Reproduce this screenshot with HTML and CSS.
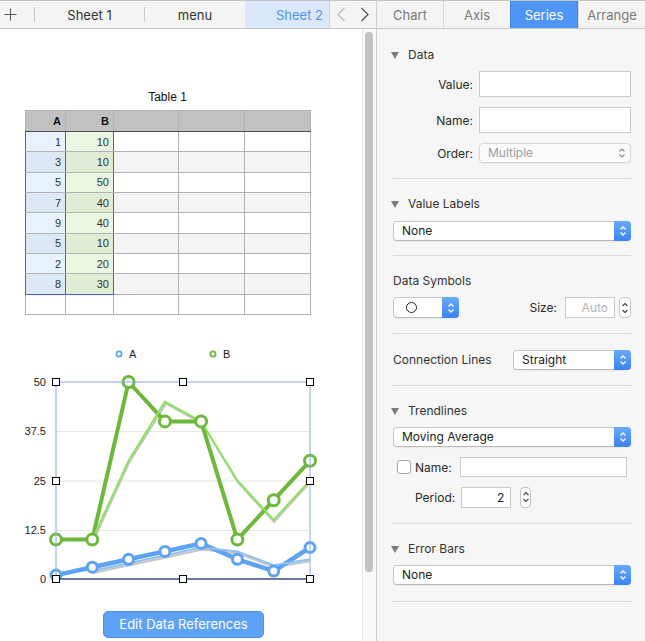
FILE: index.html
```html
<!DOCTYPE html>
<html lang="en">
<head>
    <meta charset="UTF-8">
    <title>Series Inspector</title>
    <link rel="stylesheet" href="styles.css">
</head>
<body>
<div class="app">
    <div class="sheet">
        <div class="sheet-tabs">
            <span class="tab-add">
                <svg width="13" height="13" viewBox="0 0 13 13"><path d="M6.5 0.5v12M0.5 6.5h12" stroke="#555" stroke-width="1"/></svg>
            </span>
            <span class="sep"></span>
            <span class="tab tab-wide">Sheet 1</span>
            <span class="sep"></span>
            <span class="tab">menu</span>
            <span class="tab active">Sheet 2</span>
            <span class="tab-nav">
                <svg width="10" height="15" viewBox="0 0 10 15"><path d="M8.5 1L2 7.5 8.5 14" fill="none" stroke="#bdbdbd" stroke-width="1.3"/></svg>
                <svg width="10" height="15" viewBox="0 0 10 15"><path d="M1.5 1L8 7.5 1.5 14" fill="none" stroke="#555" stroke-width="1.3"/></svg>
            </span>
        </div>
        <div class="sheet-body">
            <div class="canvas">
                <div class="table-title">Table 1</div>
                <table class="grid">
                    <colgroup>
                        <col style="width:40px"><col style="width:48px"><col style="width:65px"><col style="width:66px"><col style="width:66px">
                    </colgroup>
                    <tr class="head"><th>A</th><th>B</th><th></th><th></th><th></th></tr>
                    <tr><td class="a">1</td><td class="b">10</td><td></td><td></td><td></td></tr>
                    <tr class="alt"><td class="a">3</td><td class="b">10</td><td></td><td></td><td></td></tr>
                    <tr><td class="a">5</td><td class="b">50</td><td></td><td></td><td></td></tr>
                    <tr class="alt"><td class="a">7</td><td class="b">40</td><td></td><td></td><td></td></tr>
                    <tr><td class="a">9</td><td class="b">40</td><td></td><td></td><td></td></tr>
                    <tr class="alt"><td class="a">5</td><td class="b">10</td><td></td><td></td><td></td></tr>
                    <tr><td class="a">2</td><td class="b">20</td><td></td><td></td><td></td></tr>
                    <tr class="alt last"><td class="a">8</td><td class="b">30</td><td></td><td></td><td></td></tr>
                    <tr><td></td><td></td><td></td><td></td><td></td></tr>
                </table>

                <svg class="chart" width="340" height="262" viewBox="0 340 340 262">
                    <!-- legend -->
                    <circle cx="119" cy="353" r="2.6" fill="#fff" stroke="#5ea2f2" stroke-width="1.8"/>
                    <text x="129" y="357" class="lbl">A</text>
                    <circle cx="213" cy="353" r="2.6" fill="#fff" stroke="#6cb83a" stroke-width="1.8"/>
                    <text x="223" y="357" class="lbl">B</text>

                    <!-- axis labels -->
                    <g class="lbl" text-anchor="end">
                        <text x="46" y="385">50</text>
                        <text x="46" y="434">37.5</text>
                        <text x="46" y="484">25</text>
                        <text x="46" y="533">12.5</text>
                        <text x="46" y="582">0</text>
                    </g>
                    <g stroke="#e6e6e6" stroke-width="1">
                        <line x1="56" y1="430.5" x2="310" y2="430.5"/>
                        <line x1="56" y1="480" x2="310" y2="480"/>
                        <line x1="56" y1="529.5" x2="310" y2="529.5"/>
                    </g>

                    <!-- trendline shadows -->
                    <g fill="none" stroke="#c4c4c4" stroke-width="2">
                        <polyline points="93,540.6 129,461.8 166,402.7 202,422.4 238,481.5 274,520.9 310,481.5"/>
                        <polyline points="93,572.1 129,564.2 166,556.4 202,548.5 238,552.4 274,566.2 310,560.3"/>
                    </g>

                    <!-- series A -->
                    <polyline points="56,574.1 92.3,566.2 128.6,558.3 164.9,550.4 201.1,542.5 237.4,558.3 273.7,570.1 310,546.5" fill="none" stroke="#5ea2f2" stroke-width="4.5" stroke-linejoin="round"/>
                    <!-- series B -->
                    <polyline points="56,538.6 92.3,538.6 128.6,381 164.9,420.4 201.1,420.4 237.4,538.6 273.7,499.2 310,459.8" fill="none" stroke="#6cb83a" stroke-width="4" stroke-linejoin="round"/>

                    <!-- trendlines -->
                    <polyline points="92.3,538.6 128.6,459.8 164.9,400.7 201.1,420.4 237.4,479.5 273.7,518.9 310,479.5" fill="none" stroke="#8de35c" stroke-width="2"/>
                    <polyline points="92.3,570.1 128.6,562.2 164.9,554.4 201.1,546.5 237.4,550.4 273.7,564.2 310,558.3" fill="none" stroke="#8dc0f7" stroke-width="2"/>

                    <!-- markers -->
                    <g fill="#fff" stroke="#5ea2f2" stroke-width="3">
                        <circle cx="56" cy="574.1" r="5"/>
                        <circle cx="92.3" cy="566.2" r="5"/>
                        <circle cx="128.6" cy="558.3" r="5"/>
                        <circle cx="164.9" cy="550.4" r="5"/>
                        <circle cx="201.1" cy="542.5" r="5"/>
                        <circle cx="237.4" cy="558.3" r="5"/>
                        <circle cx="273.7" cy="570.1" r="5"/>
                        <circle cx="310" cy="546.5" r="5"/>
                    </g>
                    <g fill="#fff" stroke="#6cb83a" stroke-width="3">
                        <circle cx="56" cy="538.6" r="5.5"/>
                        <circle cx="92.3" cy="538.6" r="5.5"/>
                        <circle cx="128.6" cy="381" r="5.5"/>
                        <circle cx="164.9" cy="420.4" r="5.5"/>
                        <circle cx="201.1" cy="420.4" r="5.5"/>
                        <circle cx="237.4" cy="538.6" r="5.5"/>
                        <circle cx="273.7" cy="499.2" r="5.5"/>
                        <circle cx="310" cy="459.8" r="5.5"/>
                    </g>

                    <!-- baseline + selection frame -->
                    <line x1="56" y1="578" x2="310" y2="578" stroke="#111" stroke-width="1.5"/>
                    <rect x="56" y="381" width="254" height="197" fill="none" stroke="#86a6f2" stroke-width="1"/>
                    <g fill="#fff" stroke="#000" stroke-width="1">
                        <rect x="52.5" y="377.5" width="7" height="7"/>
                        <rect x="179.5" y="377.5" width="7" height="7"/>
                        <rect x="306.5" y="377.5" width="7" height="7"/>
                        <rect x="52.5" y="476.5" width="7" height="7"/>
                        <rect x="306.5" y="476.5" width="7" height="7"/>
                        <rect x="52.5" y="574.5" width="7" height="7"/>
                        <rect x="179.5" y="574.5" width="7" height="7"/>
                        <rect x="306.5" y="574.5" width="7" height="7"/>
                    </g>
                </svg>

                <button class="edit-btn">Edit Data References</button>
            </div>
            <div class="scrollbar"><div class="thumb"></div></div>
        </div>
    </div>

    <div class="inspector">
        <div class="insp-tabs">
            <span class="itab">Chart</span>
            <span class="itab">Axis</span>
            <span class="itab active">Series</span>
            <span class="itab">Arrange</span>
        </div>

        <div class="section s-data">
            <div class="heading"><span class="disclosure"></span>Data</div>
            <div class="form-row tall">
                <span class="form-label">Value:</span>
                <span class="field"></span>
            </div>
            <div class="form-row tall">
                <span class="form-label">Name:</span>
                <span class="field"></span>
            </div>
            <div class="form-row">
                <span class="form-label">Order:</span>
                <div class="popup disabled grow">
                    <span class="value">Multiple</span>
                    <span class="plain-arrows">
                        <svg width="8" height="12" viewBox="0 0 8 12"><path d="M1.5 4.5L4 2l2.5 2.5M1.5 7.5L4 10l2.5-2.5" fill="none" stroke="#8a8a8a" stroke-width="1.2"/></svg>
                    </span>
                </div>
            </div>
        </div>

        <div class="section s-labels">
            <div class="heading"><span class="disclosure"></span>Value Labels</div>
            <div class="popup block">
                <span class="value">None</span>
                <span class="arrows">
                    <svg width="8" height="12" viewBox="0 0 8 12"><path d="M1.5 4.5L4 2l2.5 2.5M1.5 7.5L4 10l2.5-2.5" fill="none" stroke="#fff" stroke-width="1.3"/></svg>
                </span>
            </div>
        </div>

        <div class="section s-symbols">
            <div class="heading">Data Symbols</div>
            <div class="symbol-row">
                <div class="popup symbol">
                    <span class="value"><span class="ring"></span></span>
                    <span class="arrows">
                        <svg width="8" height="12" viewBox="0 0 8 12"><path d="M1.5 4.5L4 2l2.5 2.5M1.5 7.5L4 10l2.5-2.5" fill="none" stroke="#fff" stroke-width="1.3"/></svg>
                    </span>
                </div>
                <div class="size-group">
                    <span class="size-label">Size:</span>
                    <span class="field small placeholder">Auto</span>
                    <span class="stepper">
                        <svg width="8" height="14" viewBox="0 0 8 14"><path d="M1.5 5L4 2.5 6.5 5M1.5 9L4 11.5 6.5 9" fill="none" stroke="#444" stroke-width="1.1"/></svg>
                    </span>
                </div>
            </div>
        </div>

        <div class="section s-conn">
            <span class="heading">Connection Lines</span>
            <div class="popup conn">
                <span class="value">Straight</span>
                <span class="arrows">
                    <svg width="8" height="12" viewBox="0 0 8 12"><path d="M1.5 4.5L4 2l2.5 2.5M1.5 7.5L4 10l2.5-2.5" fill="none" stroke="#fff" stroke-width="1.3"/></svg>
                </span>
            </div>
        </div>

        <div class="section">
            <div class="heading"><span class="disclosure"></span>Trendlines</div>
            <div class="popup block">
                <span class="value">Moving Average</span>
                <span class="arrows">
                    <svg width="8" height="12" viewBox="0 0 8 12"><path d="M1.5 4.5L4 2l2.5 2.5M1.5 7.5L4 10l2.5-2.5" fill="none" stroke="#fff" stroke-width="1.3"/></svg>
                </span>
            </div>
            <div class="trend-row">
                <span class="checkbox"></span>
                <span class="trend-label">Name:</span>
                <span class="field name-field"></span>
            </div>
            <div class="trend-row period">
                <span class="trend-label">Period:</span>
                <span class="field small number">2</span>
                <span class="stepper">
                    <svg width="8" height="14" viewBox="0 0 8 14"><path d="M1.5 5L4 2.5 6.5 5M1.5 9L4 11.5 6.5 9" fill="none" stroke="#444" stroke-width="1.1"/></svg>
                </span>
            </div>
        </div>

        <div class="section">
            <div class="heading"><span class="disclosure"></span>Error Bars</div>
            <div class="popup block">
                <span class="value">None</span>
                <span class="arrows">
                    <svg width="8" height="12" viewBox="0 0 8 12"><path d="M1.5 4.5L4 2l2.5 2.5M1.5 7.5L4 10l2.5-2.5" fill="none" stroke="#fff" stroke-width="1.3"/></svg>
                </span>
            </div>
        </div>
    </div>
</div>
</body>
</html>
```

FILE: styles.css
```css
body {
    margin: 0;
    font-family: Inter, "Liberation Sans", sans-serif;
    font-size: 13px;
    color: #2a2a2a;
    background-color: #fff;
}
.app {
    display: flex;
    width: 645px;
    height: 641px;
    overflow: hidden;
}

/* left: sheet */
.sheet {
    width: 376px;
    border-right: 1px solid #cfcfcf;
    display: flex;
    flex-direction: column;
}
.sheet-tabs, .insp-tabs {
    display: flex;
    align-items: stretch;
    height: 27px;
    border-top: 1px solid #c4c4c4;
    border-bottom: 1px solid #c8c8c8;
    background-color: #f4f4f4;
}
.tab-add {
    width: 34px;
    display: flex;
    align-items: center;
    padding-left: 4px;
    box-sizing: border-box;
}
.sep {
    width: 1px;
    height: 15px;
    align-self: center;
    background-color: #c9c9c9;
}
.tab {
    width: 100px;
    display: flex;
    align-items: center;
    justify-content: center;
    color: #333;
}
.tab-wide {
    width: 109px;
}
.tab.active {
    width: 84px;
    justify-content: flex-end;
    padding-right: 6px;
    box-sizing: border-box;
    background-color: #dbe8fb;
    color: #4e93ee;
}
.tab-nav {
    flex: 1;
    display: flex;
    align-items: center;
    gap: 14px;
    padding-left: 6px;
    border-left: 1px solid #d2d2d2;
}

.sheet-body {
    flex: 1;
    display: flex;
    min-height: 0;
}
.canvas {
    flex: 1;
    overflow: hidden;
}
.table-title {
    width: 285px;
    margin: 60px 0 5px 25px;
    text-align: center;
    font-family: "Liberation Sans", Arial, sans-serif;
    font-size: 12px;
    line-height: 16px;
    color: #111;
}
.grid {
    margin-left: 25px;
    border-collapse: collapse;
    table-layout: fixed;
    width: 285px;
    font-family: "Liberation Sans", Arial, sans-serif;
    font-size: 11px;
    color: #333;
}
.grid th, .grid td {
    border: 1px solid #b2b2b2;
    height: 19.33px;
    padding: 0 4px;
    text-align: right;
}
.grid .head th {
    height: 20px;
    background-color: #c1c1c1;
    border-bottom-color: #4a4a4a;
    color: #111;
}
.grid .alt td {
    background-color: #f4f4f4;
}
.grid td.a {
    background-color: #e7f2fe;
    border-left-color: #3d62d4;
    border-right-color: #3d62d4;
}
.grid td.b {
    background-color: #e9f6e2;
    border-right-color: #3d62d4;
}
.grid .alt td.a {
    background-color: #dce8f5;
}
.grid .alt td.b {
    background-color: #dfedd5;
}
.grid .last td.a, .grid .last td.b {
    border-bottom-color: #3d62d4;
}

.chart {
    display: block;
    margin-top: 26px;
}
.lbl {
    font-family: "Liberation Sans", Arial, sans-serif;
    font-size: 11px;
    fill: #222;
}
.edit-btn {
    display: block;
    margin: 8px 0 0 103px;
    width: 161px;
    height: 27px;
    border: 1px solid #4d90ec;
    border-radius: 5px;
    background-color: #5ea2f7;
    color: #fff;
    font-family: Inter, "Liberation Sans", sans-serif;
    font-size: 13px;
    padding: 0;
}

.scrollbar {
    width: 13px;
    border-left: 1px solid #e6e6e6;
    background-color: #fafafa;
}
.thumb {
    width: 8px;
    height: 540px;
    margin: 3px 0 0 2px;
    border-radius: 4px;
    background-color: #c2c2c2;
}

/* right: inspector */
.inspector {
    flex: 1;
    background-color: #f6f6f6;
    display: flex;
    flex-direction: column;
}
.itab {
    flex: 1;
    display: flex;
    align-items: center;
    justify-content: center;
    color: #7a7a7a;
    border-left: 1px solid #dadada;
}
.itab:first-child {
    border-left: none;
}
.itab.active {
    background-color: #4d95f7;
    color: #fff;
    border-left-color: #3f85e8;
    border-right: 1px solid #3f85e8;
}

.section {
    margin: 0 14px 0 16px;
    padding: 17px 0 16px;
    border-bottom: 1px solid #dcdcdc;
    font-size: 12px;
}
.s-data {
    padding: 18px 0 15px;
}
.s-labels {
    padding-bottom: 14px;
}
.s-labels .heading {
    margin-bottom: 9px;
}
.s-symbols {
    padding-bottom: 15px;
}
.heading {
    display: flex;
    align-items: center;
    line-height: 16px;
    height: 16px;
    margin-bottom: 8px;
    color: #333;
}
.disclosure {
    width: 0;
    height: 0;
    margin: 1px 9px 0 -2px;
    border-left: 4px solid transparent;
    border-right: 4px solid transparent;
    border-top: 7px solid #7c7c7c;
}

.form-row {
    display: flex;
    align-items: center;
    gap: 6px;
    margin-top: 10px;
}
.form-row:nth-child(2) {
    margin-top: 0;
}
.form-label {
    width: 80px;
    text-align: right;
}
.field {
    display: block;
    box-sizing: border-box;
    background-color: #fff;
    border: 1px solid #cacaca;
}
.form-row.tall .field {
    flex: 1;
    height: 26px;
}
.grow {
    flex: 1;
}

.popup {
    display: flex;
    height: 20px;
    box-sizing: border-box;
    border: 1px solid #c7c7c7;
    border-bottom-color: #b9b9b9;
    border-radius: 4px;
    background-color: #fff;
    box-shadow: 0 1px 1px rgba(0, 0, 0, 0.05);
}
.popup .value {
    flex: 1;
    padding-left: 8px;
    line-height: 18px;
    color: #222;
}
.popup .arrows {
    width: 17px;
    margin: -1px -1px -1px 0;
    border-radius: 0 4px 4px 0;
    background: linear-gradient(#6aabfc, #3a82f6);
    display: flex;
    align-items: center;
    justify-content: center;
}
.popup.disabled {
    border-color: #d7d7d7;
    background-color: #fbfbfb;
}
.popup.disabled .value {
    color: #9b9b9b;
}
.plain-arrows {
    width: 17px;
    display: flex;
    align-items: center;
    justify-content: center;
}

.symbol-row {
    display: flex;
    justify-content: space-between;
    align-items: center;
    height: 21px;
}
.popup.symbol {
    width: 66px;
    height: 21px;
}
.ring {
    display: inline-block;
    width: 9px;
    height: 9px;
    margin: 4px 0 0 4px;
    border: 1px solid #222;
    border-radius: 50%;
}
.size-group {
    display: flex;
    align-items: center;
}
.size-label {
    margin-right: 8px;
}
.field.small {
    width: 50px;
    height: 21px;
    text-align: right;
    padding-right: 6px;
    line-height: 19px;
}
.placeholder {
    color: #b5b5b5;
}
.stepper {
    width: 12px;
    height: 21px;
    margin-left: 4px;
    box-sizing: border-box;
    border: 1px solid #c4c4c4;
    border-radius: 4px;
    background-color: #fff;
    display: flex;
    align-items: center;
    justify-content: center;
}

.s-conn {
    display: flex;
    justify-content: space-between;
    align-items: center;
    padding: 16px 0 15px;
}
.s-conn .heading {
    margin-bottom: 0;
}
.popup.conn {
    width: 118px;
}

.trend-row {
    display: flex;
    align-items: center;
    margin-top: 10px;
    height: 20px;
}
.checkbox {
    width: 14px;
    height: 14px;
    margin: 0 4px 0 4px;
    box-sizing: border-box;
    border: 1px solid #a9a9a9;
    border-radius: 3px;
    background-color: #fff;
}
.trend-label {
    margin-right: 8px;
}
.name-field {
    width: 167px;
    height: 20px;
}
.trend-row.period {
    padding-left: 22px;
}
.trend-row.period .trend-label {
    margin-right: 6px;
}
.number {
    color: #222;
}
.trend-row.period .stepper {
    width: 11px;
    margin-left: 9px;
}
```
